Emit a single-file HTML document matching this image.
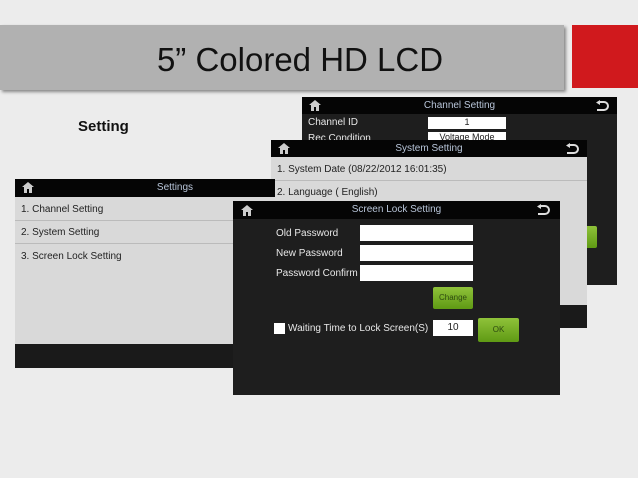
<!DOCTYPE html>
<html><head><meta charset="utf-8"><style>
*{margin:0;padding:0;box-sizing:border-box}
body{width:638px;height:478px;overflow:hidden;background:#ececec;font-family:"Liberation Sans",sans-serif;position:relative}
.a{position:absolute}
.hdr{position:absolute;left:0;top:0;right:0;background:#050505;color:#b9c6da;font-size:10px;text-align:center}
.t{position:absolute;font-size:10px;color:#222}
.w{position:absolute;font-size:10px;color:#e8e8e8}
.box{position:absolute;background:#fff}
.btn{position:absolute;background:linear-gradient(#8fc23a,#5f9a14);border-radius:2px;color:#2e4a10;font-size:8px;text-align:center}
svg{position:absolute}
</style></head><body>
<div class="a" style="left:0;top:25px;width:564px;height:65px;background:#b1b1b1;box-shadow:2px 2px 3px #888"></div>
<div class="a" style="left:0;top:27px;width:600px;height:65px;text-align:center;line-height:65px;font-size:33px;color:#111">5” Colored HD LCD</div>
<div class="a" style="left:572px;top:25px;width:66px;height:63px;background:#d0191d"></div>
<div class="a" style="left:78px;top:118px;font-size:15px;font-weight:bold;color:#111">Setting</div>

<!-- channel -->
<div class="a" style="left:302px;top:97px;width:315px;height:188px;background:#1e1e1e">
<div class="hdr" style="height:17px;line-height:17px">Channel Setting</div>
<svg style="left:7px;top:3px" width="12" height="11" viewBox="0 0 12 11"><path d="M6 0L0 5h2v6h3V7h2v4h3V5h2z" fill="#ccc"/></svg>
<svg style="left:293px;top:3px" width="14" height="12" viewBox="0 0 14 12"><path d="M4 2h5a4 4 0 0 1 0 8H2" stroke="#ddd" stroke-width="2" fill="none"/><path d="M5 0L1 2.5 5 5z" fill="#ddd"/></svg>
<div class="w" style="left:6px;top:20px">Channel ID</div>
<div class="box" style="left:126px;top:20px;width:78px;height:12px;font-size:9px;text-align:center;color:#222">1</div>
<div class="w" style="left:6px;top:36px">Rec Condition</div>
<div class="box" style="left:126px;top:35px;width:78px;height:12px;font-size:9px;text-align:center;color:#222">Voltage Mode</div>
<div class="btn" style="left:283px;top:129px;width:12px;height:22px"></div>
</div>

<!-- system -->
<div class="a" style="left:271px;top:140px;width:316px;height:188px;background:#1a1a1a">
<div class="a" style="left:0;top:17px;width:316px;height:148px;background:#d9d9d9"></div>
<div class="hdr" style="height:17px;line-height:17px">System Setting</div>
<svg style="left:7px;top:3px" width="12" height="11" viewBox="0 0 12 11"><path d="M6 0L0 5h2v6h3V7h2v4h3V5h2z" fill="#ccc"/></svg>
<svg style="left:294px;top:3px" width="14" height="12" viewBox="0 0 14 12"><path d="M4 2h5a4 4 0 0 1 0 8H2" stroke="#ddd" stroke-width="2" fill="none"/><path d="M5 0L1 2.5 5 5z" fill="#ddd"/></svg>
<div class="t" style="left:6px;top:24px">1. System Date (08/22/2012 16:01:35)</div>
<div class="a" style="left:0;top:40px;width:316px;height:1px;background:#bbb"></div>
<div class="t" style="left:6px;top:47px">2. Language ( English)</div>
</div>

<!-- settings -->
<div class="a" style="left:15px;top:179px;width:260px;height:189px;background:#1a1a1a">
<div class="a" style="left:0;top:18px;width:260px;height:147px;background:#d9d9d9"></div>
<div class="hdr" style="height:18px;line-height:18px;text-indent:60px">Settings</div>
<svg style="left:7px;top:3px" width="12" height="11" viewBox="0 0 12 11"><path d="M6 0L0 5h2v6h3V7h2v4h3V5h2z" fill="#ccc"/></svg>
<div class="t" style="left:6px;top:25px">1. Channel Setting</div>
<div class="a" style="left:0;top:41px;width:260px;height:1px;background:#bbb"></div>
<div class="t" style="left:6px;top:48px">2. System Setting</div>
<div class="a" style="left:0;top:64px;width:260px;height:1px;background:#bbb"></div>
<div class="t" style="left:6px;top:72px">3. Screen Lock Setting</div>
</div>

<!-- screen lock -->
<div class="a" style="left:233px;top:201px;width:327px;height:194px;background:#1e1e1e">
<div class="hdr" style="height:18px;line-height:18px">Screen Lock Setting</div>
<svg style="left:8px;top:4px" width="12" height="11" viewBox="0 0 12 11"><path d="M6 0L0 5h2v6h3V7h2v4h3V5h2z" fill="#ccc"/></svg>
<svg style="left:303px;top:3px" width="14" height="12" viewBox="0 0 14 12"><path d="M4 2h5a4 4 0 0 1 0 8H2" stroke="#ddd" stroke-width="2" fill="none"/><path d="M5 0L1 2.5 5 5z" fill="#ddd"/></svg>
<div class="w" style="left:43px;top:27px">Old Password</div>
<div class="box" style="left:127px;top:24px;width:113px;height:16px"></div>
<div class="w" style="left:43px;top:47px">New Password</div>
<div class="box" style="left:127px;top:44px;width:113px;height:16px"></div>
<div class="w" style="left:43px;top:67px">Password Confirm</div>
<div class="box" style="left:127px;top:64px;width:113px;height:16px"></div>
<div class="btn" style="left:200px;top:86px;width:40px;height:22px;line-height:22px">Change</div>
<div class="box" style="left:41px;top:122px;width:11px;height:11px"></div>
<div class="w" style="left:55px;top:122px">Waiting Time to Lock Screen(S)</div>
<div class="box" style="left:200px;top:119px;width:40px;height:16px;font-size:10px;text-align:center;line-height:16px;color:#222">10</div>
<div class="btn" style="left:245px;top:117px;width:41px;height:24px;line-height:24px">OK</div>
</div>
</body></html>
